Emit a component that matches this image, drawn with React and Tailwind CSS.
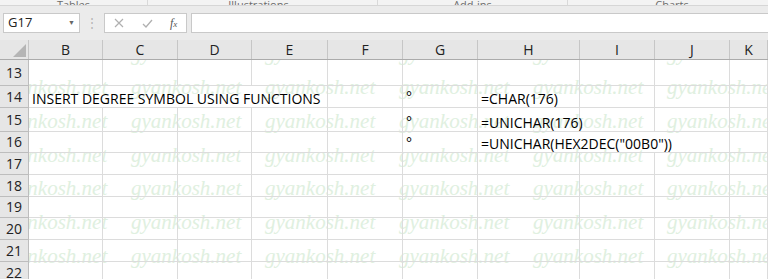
import React from 'react'

const cols = ['B', 'C', 'D', 'E', 'F', 'G', 'H', 'I', 'J', 'K']

// row number -> height in px
const rows = [
    { n: 13, h: 26 },
    { n: 14, h: 22 },
    { n: 15, h: 24 },
    { n: 16, h: 21 },
    { n: 17, h: 22 },
    { n: 18, h: 22 },
    { n: 19, h: 21 },
    { n: 20, h: 22 },
    { n: 21, h: 22 },
    { n: 22, h: 22 },
]

const gridCols = 'grid-cols-[29px_74px_75px_74px_76px_75px_75px_102px_75px_75px_1fr]'
const font = { fontFamily: '"Open Sans", "Liberation Sans", sans-serif' }

const Ribbon = () => (
    <div className="h-[6px] bg-[#f3f3f3] border-b border-[#d6d6d6] flex overflow-hidden text-[11px] text-[#6b6b6b] leading-none">
        <div className="w-[148px] border-r border-[#d9d9d9] flex justify-center items-end"><span className="-mb-[5px]">Tables</span></div>
        <div className="w-[230px] border-r border-[#d9d9d9] flex justify-center items-end"><span className="-mb-[5px] -ml-[8px]">Illustrations</span></div>
        <div className="w-[190px] border-r border-[#d9d9d9] flex justify-center items-end"><span className="-mb-[5px]">Add-ins</span></div>
        <div className="flex-1 flex justify-center items-end"><span className="-mb-[5px] ml-[8px]">Charts</span></div>
    </div>
)

const FormulaBar = () => (
    <div className="h-[34px] bg-[#ebebeb] flex items-start pt-[7px] pl-[3px]">
        <div className="w-[77px] h-[20px] bg-white border border-[#c9c9c9] flex items-center pl-[4px] pr-[4px] text-[13px] text-[#222]">
            <span>G17</span>
            <span className="ml-auto text-[7px] text-[#666]">▼</span>
        </div>
        <div className="w-[24px] h-[20px] flex items-center justify-center text-[#b3b3b3] text-[12px]">⋮</div>
        <div className="w-[83px] h-[20px] bg-white border border-[#c9c9c9] flex items-center text-[#a8a8a8]">
            <svg width="10" height="10" viewBox="0 0 10 10" className="ml-[9px]"><path d="M1 1 L9 9 M9 1 L1 9" stroke="#b0b0b0" strokeWidth="1.2" /></svg>
            <svg width="11" height="9" viewBox="0 0 11 9" className="ml-[18px]"><path d="M1 5 L4 8 L10 1" stroke="#b0b0b0" strokeWidth="1.3" fill="none" /></svg>
            <span className="ml-[17px] text-[12px] italic text-[#555]" style={{ fontFamily: '"Liberation Serif", serif' }}>f<span className="text-[9px]">x</span></span>
        </div>
        <div className="flex-1 h-[20px] ml-[4px] bg-white border border-[#c9c9c9] border-r-0" />
    </div>
)

// faint sheet background watermark
const Watermarks = () => {
    const xs = [-61, 73, 207, 341, 475, 609, 743]
    const ys = [-6, 28, 62, 96, 129, 163, 197, 231]
    return (
        <div className="absolute inset-0 overflow-hidden pointer-events-none">
            {ys.map((y) => xs.map((x) => (
                <span
                    key={x + '-' + y}
                    className="absolute italic text-[21px] leading-none text-[#e0f0e0] whitespace-nowrap"
                    style={{ left: x + 29, top: y - 11, fontFamily: '"Liberation Serif", serif' }}
                >
                    gyankosh.net
                </span>
            )))}
        </div>
    )
}

const cell = 'border-r border-b border-[#dcdcdc] text-[14px] text-black whitespace-nowrap flex items-end pb-[1px] pl-[3px] leading-none'

const Row = ({ n, h }) => {
    const head = (
        <div className="bg-[#e6e6e6] border-r border-b border-[#bdbdbd] text-[14px] text-[#222] flex items-center justify-center leading-none" style={{ height: h }}>
            {n}
        </div>
    )
    if (n === 14) {
        return (
            <>
                {head}
                <div className={cell + ' col-span-4'}>INSERT DEGREE SYMBOL USING FUNCTIONS</div>
                <div className={cell} />
                <div className={cell + ' pl-[2px] pb-[3px]'}>°</div>
                <div className={cell}>=CHAR(176)</div>
                <div className={cell} />
                <div className={cell} />
                <div className={cell} />
            </>
        )
    }
    if (n === 15) {
        return (
            <>
                {head}
                <div className={cell} /><div className={cell} /><div className={cell} /><div className={cell} /><div className={cell} />
                <div className={cell + ' pl-[2px] pb-[2px]'}>°</div>
                <div className={cell}>=UNICHAR(176)</div>
                <div className={cell} />
                <div className={cell} />
                <div className={cell} />
            </>
        )
    }
    if (n === 16) {
        return (
            <>
                {head}
                <div className={cell} /><div className={cell} /><div className={cell} /><div className={cell} /><div className={cell} />
                <div className={cell + ' pl-[2px] pb-[2px]'}>°</div>
                <div className={cell + ' col-span-3'}>=UNICHAR(HEX2DEC("00B0"))</div>
                <div className={cell} />
            </>
        )
    }
    return (
        <>
            {head}
            {cols.map((c) => <div key={c} className={cell} />)}
        </>
    )
}

export default function App() {
    return (
        <div className="w-[768px] h-[279px] overflow-hidden bg-white" style={font}>
            <Ribbon />
            <FormulaBar />
            <div className={'grid ' + gridCols + ' h-[20px] bg-[#e6e6e6] border-b border-[#ababab]'}>
                <div className="border-r border-[#c6c6c6] flex items-end justify-end pr-[2px] pb-[2px]">
                    <svg width="13" height="13" viewBox="0 0 13 13"><path d="M13 0 L13 13 L0 13 Z" fill="#b5b5b5" /></svg>
                </div>
                {cols.map((c) => (
                    <div key={c} className="border-r border-[#c6c6c6] flex items-center justify-center text-[14px] text-[#222] leading-none">{c}</div>
                ))}
            </div>
            <div className="relative">
                <div className="absolute left-[29px] right-0 top-0 bottom-0">
                    <Watermarks />
                </div>
                <div className={'relative grid ' + gridCols}>
                    {rows.map((r) => <Row key={r.n} {...r} />)}
                </div>
            </div>
        </div>
    )
}
